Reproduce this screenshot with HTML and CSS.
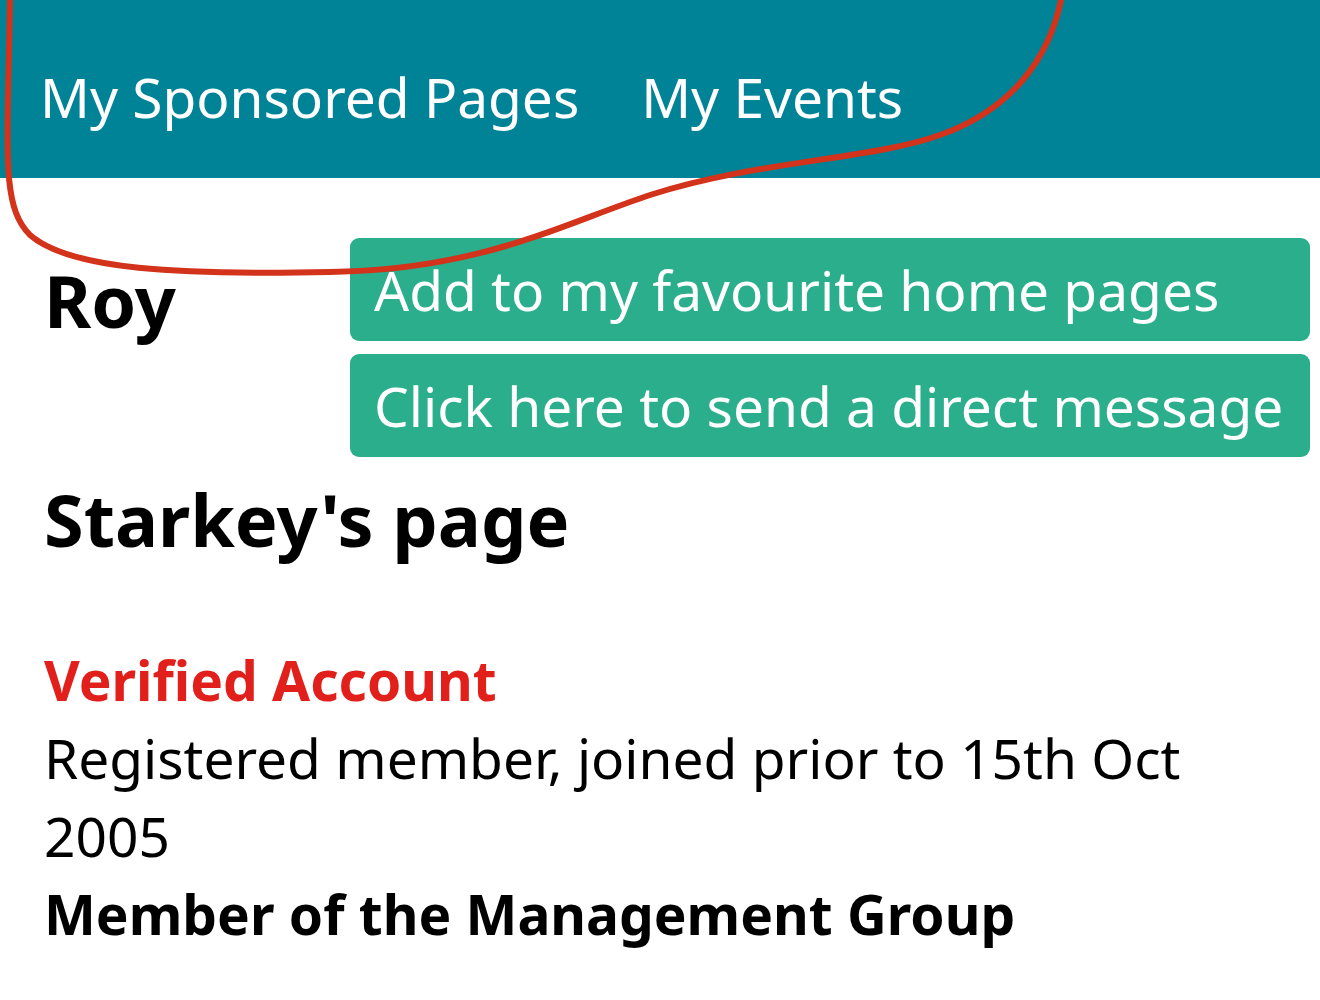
FILE: index.html
```html
<!DOCTYPE html>
<html lang="en">
<head>
  <meta charset="UTF-8" />
  <meta name="viewport" content="width=device-width, initial-scale=1" />
  <title>Roy Starkey's page</title>
  <link rel="stylesheet" href="styles.css">
</head>
<body>

<div class="topnav">
  <a href="#">My Sponsored Pages</a>
  <a href="#">My Events</a>
</div>

<div class="page">
  <div class="actions">
    <button>Add to my favourite home pages</button>
    <button>Click here to send a direct message</button>
  </div>
  <h1>Roy Starkey's page</h1>

  <div class="member-info">
    <div class="verified">Verified Account</div>
    <div class="joined">Registered member, joined prior to 15th Oct 2005</div>
    <div class="group">Member of the Management Group</div>
  </div>
</div>

<!-- hand-drawn annotation over the screenshot -->
<svg class="scribble" width="1320" height="290" viewBox="0 0 1320 290">
  <path d="M1062,-5 C1050,60 1010,110 940,135 C870,160 760,160 650,195 C560,225 480,270 330,272 C180,275 70,270 30,235 C0,205 8,150 10,-5"
        fill="none" stroke="#d3321b" stroke-width="6" stroke-linecap="round" />
</svg>

</body>
</html>
```

FILE: styles.css
```css
body {
  margin: 0;
  font-family: "Noto Sans", "Open Sans", sans-serif;
  background: #fff;
  color: #000;
}
.topnav {
  background: #008396;
  height: 178px;
  display: flex;
  align-items: flex-end;
  gap: 62px;
  padding: 0 40px 54px;
  box-sizing: border-box;
}
.topnav a {
  color: #fff;
  text-decoration: none;
  font-size: 55px;
  line-height: 1;
}
.page {
  padding: 60px 10px 0 44px;
}
.actions {
  float: right;
  width: 960px;
  display: flex;
  flex-direction: column;
  gap: 13px;
}
.actions button {
  background: #2bae8c;
  color: #fff;
  border: none;
  border-radius: 9px;
  height: 103px;
  padding: 0 24px;
  text-align: left;
  font-family: inherit;
  font-size: 55px;
  cursor: pointer;
}
h1 {
  margin: 0;
  font-size: 72px;
  font-weight: 700;
  line-height: 124px;
}
.member-info {
  clear: both;
  padding-top: 60px;
  font-size: 55px;
  line-height: 78px;
  max-width: 1240px;
}
.verified {
  color: #e1201c;
  font-weight: 700;
}
.group {
  font-weight: 700;
}
.scribble {
  position: absolute;
  top: 0;
  left: 0;
  pointer-events: none;
}
```
